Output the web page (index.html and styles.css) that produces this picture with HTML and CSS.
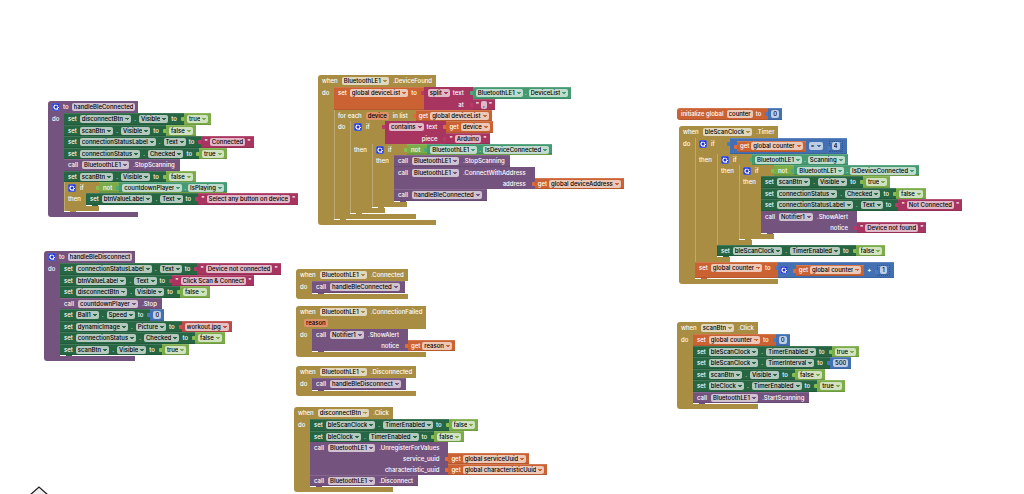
FILE: index.html
```html
<!DOCTYPE html>
<html lang="en">
<head>
<meta charset="utf-8">
<title>Blocks workspace</title>
<link rel="stylesheet" href="styles.css">
</head>
<body>
<svg class="defs" aria-hidden="true">
  <symbol id="gear" viewBox="0 0 16 16">
    <rect width="16" height="16" rx="3" fill="#6f7fd8"/>
    <rect x="1" y="1" width="14" height="14" rx="2" fill="#1f35cc"/>
    <path fill="#fff" d="M7 3h2v1.500l1.300.5 1.200-1 1.400 1.400-1 1.200.5 1.400H14v2h-1.600l-.5 1.400 1 1.200-1.400 1.400-1.200-1L9 12.500V14H7v-1.500L5.700 12l-1.200 1-1.400-1.400 1-1.200L3.600 9H2V7h1.600l.5-1.400-1-1.200L4.500 3l1.200 1L7 4.500z"/>
    <circle cx="8" cy="8" r="3" fill="#1f35cc"/>
  </symbol>
</svg>
<main class="workspace">

  <section class="root proc at-connected-proc">
    <div class="head"><svg class="gear"><use href="#gear"/></svg><span>to</span><input class="field" aria-label="Procedure name" value="handleBleConnected"></div>
    <div class="body"><div class="arm">do</div><div class="stack">
      <div class="stmt"><div class="part set"><span>set</span><select class="field" aria-label="Component"><option>disconnectBtn</option></select><span>.</span><select class="field" aria-label="Property"><option>Visible</option></select><span>to</span></div><div class="value logic"><select class="field" aria-label="Value"><option>true</option></select></div></div>
      <div class="stmt"><div class="part set"><span>set</span><select class="field" aria-label="Component"><option>scanBtn</option></select><span>.</span><select class="field" aria-label="Property"><option>Visible</option></select><span>to</span></div><div class="value logic"><select class="field" aria-label="Value"><option>false</option></select></div></div>
      <div class="stmt"><div class="part set"><span>set</span><select class="field" aria-label="Component"><option>connectionStatusLabel</option></select><span>.</span><select class="field" aria-label="Property"><option>Text</option></select><span>to</span></div><div class="value text"><b>"</b><input class="field" aria-label="Text" value="Connected"><b>"</b></div></div>
      <div class="stmt"><div class="part set"><span>set</span><select class="field" aria-label="Component"><option>connectionStatus</option></select><span>.</span><select class="field" aria-label="Property"><option>Checked</option></select><span>to</span></div><div class="value logic"><select class="field" aria-label="Value"><option>true</option></select></div></div>
      <div class="stmt"><div class="part call"><span>call</span><select class="field" aria-label="Component"><option>BluetoothLE1</option></select><span>.StopScanning</span></div></div>
      <div class="stmt"><div class="part set"><span>set</span><select class="field" aria-label="Component"><option>scanBtn</option></select><span>.</span><select class="field" aria-label="Property"><option>Visible</option></select><span>to</span></div><div class="value logic"><select class="field" aria-label="Value"><option>false</option></select></div></div>
      <div class="nest if">
        <div class="head"><svg class="gear"><use href="#gear"/></svg><span>if</span></div>
        <div class="value logic wrap"><div class="part"><span>not</span></div><div class="value getter"><select class="field" aria-label="Component"><option>countdownPlayer</option></select><span>.</span><select class="field" aria-label="Property"><option>IsPlaying</option></select></div></div>
        <div class="body"><div class="arm">then</div><div class="stack">
          <div class="stmt"><div class="part set"><span>set</span><select class="field" aria-label="Component"><option>btnValueLabel</option></select><span>.</span><select class="field" aria-label="Property"><option>Text</option></select><span>to</span></div><div class="value text"><b>"</b><input class="field" aria-label="Text" value="Select any button on device"><b>"</b></div></div>
        </div></div>
        <div class="foot"></div>
      </div>
    </div></div>
    <div class="foot"></div>
  </section>

  <section class="root proc at-disconnect-proc">
    <div class="head"><svg class="gear"><use href="#gear"/></svg><span>to</span><input class="field" aria-label="Procedure name" value="handleBleDisconnect"></div>
    <div class="body"><div class="arm">do</div><div class="stack">
      <div class="stmt"><div class="part set"><span>set</span><select class="field" aria-label="Component"><option>connectionStatusLabel</option></select><span>.</span><select class="field" aria-label="Property"><option>Text</option></select><span>to</span></div><div class="value text"><b>"</b><input class="field" aria-label="Text" value="Device not connected"><b>"</b></div></div>
      <div class="stmt"><div class="part set"><span>set</span><select class="field" aria-label="Component"><option>btnValueLabel</option></select><span>.</span><select class="field" aria-label="Property"><option>Text</option></select><span>to</span></div><div class="value text"><b>"</b><input class="field" aria-label="Text" value="Click Scan &amp; Connect"><b>"</b></div></div>
      <div class="stmt"><div class="part set"><span>set</span><select class="field" aria-label="Component"><option>disconnectBtn</option></select><span>.</span><select class="field" aria-label="Property"><option>Visible</option></select><span>to</span></div><div class="value logic"><select class="field" aria-label="Value"><option>false</option></select></div></div>
      <div class="stmt"><div class="part call"><span>call</span><select class="field" aria-label="Component"><option>countdownPlayer</option></select><span>.Stop</span></div></div>
      <div class="stmt"><div class="part set"><span>set</span><select class="field" aria-label="Component"><option>Ball1</option></select><span>.</span><select class="field" aria-label="Property"><option>Speed</option></select><span>to</span></div><div class="value math"><input class="field" aria-label="Number" value="0"></div></div>
      <div class="stmt"><div class="part set"><span>set</span><select class="field" aria-label="Component"><option>dynamicImage</option></select><span>.</span><select class="field" aria-label="Property"><option>Picture</option></select><span>to</span></div><div class="value asset"><select class="field" aria-label="Asset"><option>workout.jpg</option></select></div></div>
      <div class="stmt"><div class="part set"><span>set</span><select class="field" aria-label="Component"><option>connectionStatus</option></select><span>.</span><select class="field" aria-label="Property"><option>Checked</option></select><span>to</span></div><div class="value logic"><select class="field" aria-label="Value"><option>false</option></select></div></div>
      <div class="stmt"><div class="part set"><span>set</span><select class="field" aria-label="Component"><option>scanBtn</option></select><span>.</span><select class="field" aria-label="Property"><option>Visible</option></select><span>to</span></div><div class="value logic"><select class="field" aria-label="Value"><option>true</option></select></div></div>
    </div></div>
    <div class="foot"></div>
  </section>

  <section class="root event at-found">
    <div class="head"><span>when</span><select class="field" aria-label="Component"><option>BluetoothLE1</option></select><span>.DeviceFound</span></div>
    <div class="body"><div class="arm">do</div><div class="stack">
      <div class="stmt rows-2"><div class="part variable"><span>set</span><select class="field" aria-label="Variable"><option>global deviceList</option></select><span>to</span></div>
        <div class="value text inputs">
          <div class="part"><select class="field" aria-label="Split mode"><option>split</option></select><span>text</span></div>
          <div class="value getter"><select class="field" aria-label="Component"><option>BluetoothLE1</option></select><span>.</span><select class="field" aria-label="Property"><option>DeviceList</option></select></div>
          <div class="part"><span>at</span></div>
          <div class="value text"><b>"</b><input class="field" aria-label="Text" value=","><b>"</b></div>
        </div>
      </div>
      <div class="nest">
        <div class="head"><span>for each</span><input class="field item" aria-label="Item name" value="device"><span>in list</span></div>
        <div class="value variable"><span>get</span><select class="field" aria-label="Variable"><option>global deviceList</option></select></div>
        <div class="body"><div class="arm">do</div><div class="stack">
          <div class="nest if">
            <div class="head"><svg class="gear"><use href="#gear"/></svg><span>if</span></div>
            <div class="value text inputs">
              <div class="part"><select class="field" aria-label="Text test"><option>contains</option></select><span>text</span></div>
              <div class="value variable"><span>get</span><select class="field" aria-label="Variable"><option>device</option></select></div>
              <div class="part"><span>piece</span></div>
              <div class="value text"><b>"</b><input class="field" aria-label="Text" value="Arduino"><b>"</b></div>
            </div>
            <div class="body"><div class="arm">then</div><div class="stack">
              <div class="nest if">
                <div class="head"><svg class="gear"><use href="#gear"/></svg><span>if</span></div>
                <div class="value logic wrap"><div class="part"><span>not</span></div><div class="value getter"><select class="field" aria-label="Component"><option>BluetoothLE1</option></select><span>.</span><select class="field" aria-label="Property"><option>IsDeviceConnected</option></select></div></div>
                <div class="body"><div class="arm">then</div><div class="stack">
                  <div class="stmt"><div class="part call"><span>call</span><select class="field" aria-label="Component"><option>BluetoothLE1</option></select><span>.StopScanning</span></div></div>
                  <div class="stmt call inputs">
                    <div class="part lead"><span>call</span><select class="field" aria-label="Component"><option>BluetoothLE1</option></select><span>.ConnectWithAddress</span></div>
                    <div class="part"><span>address</span></div>
                    <div class="value variable"><span>get</span><select class="field" aria-label="Variable"><option>global deviceAddress</option></select></div>
                  </div>
                  <div class="stmt"><div class="part call"><span>call</span><select class="field" aria-label="Procedure"><option>handleBleConnected</option></select></div></div>
                </div></div>
                <div class="foot"></div>
              </div>
            </div></div>
            <div class="foot"></div>
          </div>
        </div></div>
        <div class="foot"></div>
      </div>
    </div></div>
    <div class="foot"></div>
  </section>

  <section class="root event at-connected">
    <div class="head"><span>when</span><select class="field" aria-label="Component"><option>BluetoothLE1</option></select><span>.Connected</span></div>
    <div class="body"><div class="arm">do</div><div class="stack">
      <div class="stmt"><div class="part call"><span>call</span><select class="field" aria-label="Procedure"><option>handleBleConnected</option></select></div></div>
    </div></div>
    <div class="foot"></div>
  </section>

  <section class="root event at-failed">
    <div class="head"><span>when</span><select class="field" aria-label="Component"><option>BluetoothLE1</option></select><span>.ConnectionFailed</span></div>
    <div class="params"><input class="field item" aria-label="Parameter name" value="reason"></div>
    <div class="body"><div class="arm">do</div><div class="stack">
      <div class="stmt call inputs">
        <div class="part lead"><span>call</span><select class="field" aria-label="Component"><option>Notifier1</option></select><span>.ShowAlert</span></div>
        <div class="part"><span>notice</span></div>
        <div class="value variable"><span>get</span><select class="field" aria-label="Variable"><option>reason</option></select></div>
      </div>
    </div></div>
    <div class="foot"></div>
  </section>

  <section class="root event at-disconnected">
    <div class="head"><span>when</span><select class="field" aria-label="Component"><option>BluetoothLE1</option></select><span>.Disconnected</span></div>
    <div class="body"><div class="arm">do</div><div class="stack">
      <div class="stmt"><div class="part call"><span>call</span><select class="field" aria-label="Procedure"><option>handleBleDisconnect</option></select></div></div>
    </div></div>
    <div class="foot"></div>
  </section>

  <section class="root event at-disconnect-click">
    <div class="head"><span>when</span><select class="field" aria-label="Component"><option>disconnectBtn</option></select><span>.Click</span></div>
    <div class="body"><div class="arm">do</div><div class="stack">
      <div class="stmt"><div class="part set"><span>set</span><select class="field" aria-label="Component"><option>bleScanClock</option></select><span>.</span><select class="field" aria-label="Property"><option>TimerEnabled</option></select><span>to</span></div><div class="value logic"><select class="field" aria-label="Value"><option>false</option></select></div></div>
      <div class="stmt"><div class="part set"><span>set</span><select class="field" aria-label="Component"><option>bleClock</option></select><span>.</span><select class="field" aria-label="Property"><option>TimerEnabled</option></select><span>to</span></div><div class="value logic"><select class="field" aria-label="Value"><option>false</option></select></div></div>
      <div class="stmt call inputs">
        <div class="part lead"><span>call</span><select class="field" aria-label="Component"><option>BluetoothLE1</option></select><span>.UnregisterForValues</span></div>
        <div class="part"><span>service_uuid</span></div>
        <div class="value variable"><span>get</span><select class="field" aria-label="Variable"><option>global serviceUuid</option></select></div>
        <div class="part"><span>characteristic_uuid</span></div>
        <div class="value variable"><span>get</span><select class="field" aria-label="Variable"><option>global characteristicUuid</option></select></div>
      </div>
      <div class="stmt"><div class="part call"><span>call</span><select class="field" aria-label="Component"><option>BluetoothLE1</option></select><span>.Disconnect</span></div></div>
    </div></div>
    <div class="foot"></div>
  </section>

  <section class="root at-init">
    <div class="stmt"><div class="part variable"><span>initialize global</span><input class="field" aria-label="Variable name" value="counter"><span>to</span></div><div class="value math"><input class="field" aria-label="Number" value="0"></div></div>
  </section>

  <section class="root event at-timer">
    <div class="head"><span>when</span><select class="field" aria-label="Component"><option>bleScanClock</option></select><span>.Timer</span></div>
    <div class="body"><div class="arm">do</div><div class="stack">
      <div class="nest if">
        <div class="head"><svg class="gear"><use href="#gear"/></svg><span>if</span></div>
        <div class="value math inline">
          <div class="value variable"><span>get</span><select class="field" aria-label="Variable"><option>global counter</option></select></div>
          <select class="field" aria-label="Operator"><option>=</option></select>
          <div class="value math slot"><input class="field" aria-label="Number" value="4"></div>
        </div>
        <div class="body"><div class="arm">then</div><div class="stack">
          <div class="nest if">
            <div class="head"><svg class="gear"><use href="#gear"/></svg><span>if</span></div>
            <div class="value getter"><select class="field" aria-label="Component"><option>BluetoothLE1</option></select><span>.</span><select class="field" aria-label="Property"><option>Scanning</option></select></div>
            <div class="body"><div class="arm">then</div><div class="stack">
              <div class="nest if">
                <div class="head"><svg class="gear"><use href="#gear"/></svg><span>if</span></div>
                <div class="value logic wrap"><div class="part"><span>not</span></div><div class="value getter"><select class="field" aria-label="Component"><option>BluetoothLE1</option></select><span>.</span><select class="field" aria-label="Property"><option>IsDeviceConnected</option></select></div></div>
                <div class="body"><div class="arm">then</div><div class="stack">
                  <div class="stmt"><div class="part set"><span>set</span><select class="field" aria-label="Component"><option>scanBtn</option></select><span>.</span><select class="field" aria-label="Property"><option>Visible</option></select><span>to</span></div><div class="value logic"><select class="field" aria-label="Value"><option>true</option></select></div></div>
                  <div class="stmt"><div class="part set"><span>set</span><select class="field" aria-label="Component"><option>connectionStatus</option></select><span>.</span><select class="field" aria-label="Property"><option>Checked</option></select><span>to</span></div><div class="value logic"><select class="field" aria-label="Value"><option>false</option></select></div></div>
                  <div class="stmt"><div class="part set"><span>set</span><select class="field" aria-label="Component"><option>connectionStatusLabel</option></select><span>.</span><select class="field" aria-label="Property"><option>Text</option></select><span>to</span></div><div class="value text"><b>"</b><input class="field" aria-label="Text" value="Not Connected"><b>"</b></div></div>
                  <div class="stmt call inputs">
                    <div class="part lead"><span>call</span><select class="field" aria-label="Component"><option>Notifier1</option></select><span>.ShowAlert</span></div>
                    <div class="part"><span>notice</span></div>
                    <div class="value text"><b>"</b><input class="field" aria-label="Text" value="Device not found"><b>"</b></div>
                  </div>
                </div></div>
                <div class="foot"></div>
              </div>
            </div></div>
            <div class="foot"></div>
          </div>
          <div class="stmt"><div class="part set"><span>set</span><select class="field" aria-label="Component"><option>bleScanClock</option></select><span>.</span><select class="field" aria-label="Property"><option>TimerEnabled</option></select><span>to</span></div><div class="value logic"><select class="field" aria-label="Value"><option>false</option></select></div></div>
        </div></div>
        <div class="foot"></div>
      </div>
      <div class="stmt tall"><div class="part variable"><span>set</span><select class="field" aria-label="Variable"><option>global counter</option></select><span>to</span></div>
        <div class="value math inline">
          <svg class="gear"><use href="#gear"/></svg>
          <div class="value variable"><span>get</span><select class="field" aria-label="Variable"><option>global counter</option></select></div>
          <b>+</b>
          <div class="value math slot"><input class="field" aria-label="Number" value="1"></div>
        </div>
      </div>
    </div></div>
    <div class="foot"></div>
  </section>

  <section class="root event at-scan-click">
    <div class="head"><span>when</span><select class="field" aria-label="Component"><option>scanBtn</option></select><span>.Click</span></div>
    <div class="body"><div class="arm">do</div><div class="stack">
      <div class="stmt"><div class="part variable"><span>set</span><select class="field" aria-label="Variable"><option>global counter</option></select><span>to</span></div><div class="value math"><input class="field" aria-label="Number" value="0"></div></div>
      <div class="stmt"><div class="part set"><span>set</span><select class="field" aria-label="Component"><option>bleScanClock</option></select><span>.</span><select class="field" aria-label="Property"><option>TimerEnabled</option></select><span>to</span></div><div class="value logic"><select class="field" aria-label="Value"><option>true</option></select></div></div>
      <div class="stmt"><div class="part set"><span>set</span><select class="field" aria-label="Component"><option>bleScanClock</option></select><span>.</span><select class="field" aria-label="Property"><option>TimerInterval</option></select><span>to</span></div><div class="value math"><input class="field" aria-label="Number" value="500"></div></div>
      <div class="stmt"><div class="part set"><span>set</span><select class="field" aria-label="Component"><option>scanBtn</option></select><span>.</span><select class="field" aria-label="Property"><option>Visible</option></select><span>to</span></div><div class="value logic"><select class="field" aria-label="Value"><option>false</option></select></div></div>
      <div class="stmt"><div class="part set"><span>set</span><select class="field" aria-label="Component"><option>bleClock</option></select><span>.</span><select class="field" aria-label="Property"><option>TimerEnabled</option></select><span>to</span></div><div class="value logic"><select class="field" aria-label="Value"><option>true</option></select></div></div>
      <div class="stmt"><div class="part call"><span>call</span><select class="field" aria-label="Component"><option>BluetoothLE1</option></select><span>.StartScanning</span></div></div>
    </div></div>
    <div class="foot"></div>
  </section>

  <svg class="marker" viewBox="0 0 18 8" aria-hidden="true"><path d="M0 9 9 1l9 8" fill="#f1eeee" stroke="#222" stroke-width="1.300"/></svg>
</main>
</body>
</html>
```
FILE: styles.css
```css
body {
  margin: 0;
  background: #fff;
}

.defs {
  position: absolute;
  width: 0;
  height: 0;
}

.workspace {
  position: relative;
  min-height: 100vh;
  overflow: hidden;
  font: 500 6px/8px Inter, "Liberation Sans", Arial, sans-serif;
  color: #fff;
}

/* Top-level blocks sit where they were dropped on the canvas. */
.root {
  position: absolute;
}

.at-connected-proc { left: 48px; top: 101px; }
.at-disconnect-proc { left: 44px; top: 251px; }
.at-found { left: 318px; top: 75px; }
.at-connected { left: 296px; top: 269px; }
.at-failed { left: 296px; top: 306px; }
.at-disconnected { left: 296px; top: 366px; }
.at-disconnect-click { left: 294px; top: 407px; }
.at-init { left: 677px; top: 108px; }
.at-timer { left: 679px; top: 126px; }
.at-scan-click { left: 677px; top: 322px; }

/* Block families */
.event, .nest { --c: #a98d43; }
.proc { --c: #75537f; }
.call { --c: #75537f; }
.set { --c: #266643; }
.logic { --c: #7cac4a; }
.text { --c: #a8355f; }
.math { --c: #4270b3; }
.variable { --c: #cb6233; }
.getter { --c: #459a72; }
.asset { --c: #bb4a48; }

/* C-shaped blocks: head, indented stack, foot */
.root, .nest {
  display: grid;
  grid-template-columns: max-content 1fr;
  justify-items: start;
}

.head, .arm, .foot, .part, .value, .params {
  background: var(--c);
}

.head {
  display: flex;
  align-items: flex-start;
  gap: 4px;
  justify-self: stretch;
  padding: 2px 4px 0 4px;
  box-sizing: border-box;
  min-height: 12px;
}

.root > .head { border-radius: 3px 0 0 0; }

.proc > .head {
  gap: 3px;
  padding-right: 3px;
}

.nest > .head {
  min-height: 11px;
  padding-right: 8px;
}

.if > .head { min-width: 35px; }

.params {
  grid-column: 1;
  justify-self: stretch;
  display: flex;
  padding: 1px 8px 2px;
}

.body {
  grid-column: 1 / -1;
  display: flex;
}

.arm {
  flex: none;
  box-sizing: border-box;
  width: 16px;
  padding: 2px 0 0 4px;
}

.if > .body > .arm { width: 22px; }

.foot {
  grid-column: 1;
  justify-self: stretch;
  height: 5px;
  position: relative;
}

.root > .foot { border-radius: 0 0 0 3px; }

.nest > .head, .nest > .body > .arm, .nest > .foot {
  box-shadow: inset 1px 0 rgba(255, 255, 255, .25);
}

.stack {
  display: flex;
  flex-direction: column;
  align-items: flex-start;
  padding-bottom: 1px;
}

/* Statements */
.stmt {
  position: relative;
  display: flex;
  height: 12px;
}

.stmt:nth-child(even) { height: 11px; }
.stmt.rows-2 { height: 23px; }
.stmt.tall { height: 16px; }
.at-init .part { border-radius: 3px 0 0 3px; }

.stmt:last-child > .part:first-child::after,
.stmt.inputs:last-child::after,
.nest > .foot::after {
  content: "";
  position: absolute;
  left: 6px;
  bottom: -1px;
  width: 6px;
  height: 1px;
  background: var(--c);
}

.stmt:last-child > .part.lead::after,
.at-init .stmt > .part:first-child::after {
  display: none;
}

.part {
  display: flex;
  align-items: flex-start;
  gap: 3px;
  padding: 2px 7px 0 4px;
  box-shadow: inset 0 1px rgba(255, 255, 255, .12), inset 0 -1px rgba(0, 0, 0, .1);
}

.part.call {
  gap: 4px;
  padding-right: 5px;
}

.part.lead { gap: 4px; }

.stmt.inputs, .value.inputs {
  display: grid;
  grid-template-columns: max-content max-content;
  grid-auto-rows: 11px;
  gap: 0;
  height: auto;
  padding: 0;
}

.value.inputs {
  grid-template-rows: 12px 11px;
  align-items: stretch;
  background: none;
  box-shadow: none;
}

.stmt.inputs > .part, .value.inputs > .part {
  grid-column: 1;
  justify-content: flex-end;
  padding-right: 9px;
  box-shadow: none;
}

.stmt.inputs > .part.lead { justify-content: flex-start; }

.inputs > .value { justify-self: start; }

/* Values plug into the right-hand side of a part through a small tab */
.value {
  position: relative;
  display: flex;
  align-items: flex-start;
  gap: 2px;
  padding: 2px 3px 0;
  box-shadow: inset 0 1px rgba(255, 255, 255, .15), inset 0 -1px rgba(0, 0, 0, .1);
}

.value::before {
  content: "";
  position: absolute;
  left: -3px;
  top: 4px;
  width: 3px;
  height: 4px;
  background: var(--c);
  border-radius: 1px 0 0 1px;
  filter: brightness(1.1);
}

.value.wrap {
  padding: 0;
  gap: 0;
}

.value.inline {
  align-items: center;
  gap: 3px;
  padding: 0 4px 0 7px;
  height: 16px;
}

.inline > .value {
  box-sizing: border-box;
  height: 11px;
  padding-top: 1px;
}

.inline > .gear { margin: 0 5px 0 -5px; }

.inline > .slot {
  border: 1px dotted #2d5490;
  margin-left: 3px;
  padding: 0 2px;
}

/* Fields */
.field {
  appearance: none;
  field-sizing: content;
  box-sizing: border-box;
  height: 8px;
  margin: 0;
  padding: 0 2px;
  border: 0;
  border-radius: 2px;
  font: inherit;
  color: #000;
  background: rgba(255, 255, 255, .65);
}

select.field {
  padding-right: 8px;
  background-image: conic-gradient(from 315deg at 50% 100%, var(--c) 90deg, transparent 0);
  background-repeat: no-repeat;
  background-size: 4px 2px;
  background-position: right 2px center;
}

.field.item { background: #df9168; }

.gear {
  flex: none;
  width: 8px;
  height: 8px;
}

.marker {
  position: absolute;
  left: 30px;
  bottom: 0;
  width: 18px;
  height: 8px;
}
```
